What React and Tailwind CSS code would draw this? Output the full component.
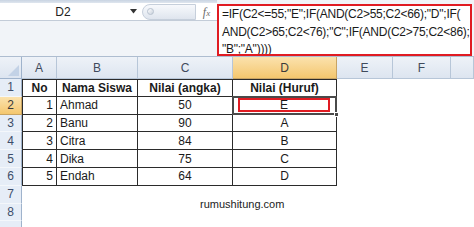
import React from 'react';

const cols = ['A', 'B', 'C', 'D', 'E', 'F', ''];
const colWidths = '22px 35px 81px 95px 104px 56px 58px 1fr';

const rows = [
  ['No', 'Nama Siswa', 'Nilai (angka)', 'Nilai (Huruf)'],
  ['1', 'Ahmad', '50', 'E'],
  ['2', 'Banu', '90', 'A'],
  ['3', 'Citra', '84', 'B'],
  ['4', 'Dika', '75', 'C'],
  ['5', 'Endah', '64', 'D'],
];

function HeaderCell({ label, active }) {
  return (
    <div
      className={
        'h-[22px] flex items-center justify-center border-r border-b text-[12px] ' +
        (active
          ? 'bg-gradient-to-b from-[#fbe2ad] to-[#f4c76e] border-[#c8a464] text-[#3a3a3a]'
          : 'bg-gradient-to-b from-[#eef2f8] to-[#dde5f0] border-[#b7c6d8] text-[#3f4a5c]')
      }
    >
      {label}
    </div>
  );
}

function RowHead({ n, active }) {
  return (
    <div
      className={
        'h-[17.8px] flex items-center justify-center border-r border-b text-[12px] ' +
        (active
          ? 'bg-gradient-to-b from-[#fbe2ad] to-[#f4c76e] border-[#c8a464] text-[#3a3a3a]'
          : 'bg-[#e6edf7] border-r-[#9fb3cc] border-b-[#f4f7fb] text-[#3d4d6a]')
      }
    >
      {n}
    </div>
  );
}

export default function App() {
  return (
    <div
      className="w-[474px] h-[227px] overflow-hidden bg-white text-[#1a1a1a] relative"
      style={{ fontFamily: '"Liberation Sans", Arial, sans-serif' }}
    >
      {/* formula bar area */}
      <div className="h-[57px] flex items-start bg-[#f1f4f8] border-b border-[#aebdd0]">
        <div className="w-[217px] flex flex-col">
          <div className="h-[3px] bg-gradient-to-b from-[#c9d4e2] to-[#dfe6ef]" />
          <div className="h-[18px] flex items-center bg-white border-b border-[#c3ccd8]">
            <div className="w-[126px] text-center text-[12px] text-[#222]">D2</div>
            <div className="w-[14px] flex justify-center">
              <svg width="7" height="5" viewBox="0 0 7 5"><path d="M0 0h7L3.5 4.5z" fill="#333" /></svg>
            </div>
            <div className="ml-[2px] w-[54px] h-[16px] rounded-l-full bg-gradient-to-b from-[#f7f9fc] to-[#dfe5ee] border border-[#c6cfdb] flex items-center pl-[4px]">
              <div className="w-[7px] h-[7px] rounded-full bg-gradient-to-br from-white to-[#c9d1dc] border border-[#b8c2cf]" />
            </div>
            <div
              className="w-[21px] text-center text-[12px] italic text-[#6b6b6b]"
              style={{ fontFamily: '"Liberation Serif", serif' }}
            >
              f<span className="text-[9px]">x</span>
            </div>
          </div>
        </div>
        <div className="mt-[4px] w-[255px] h-[52px] bg-white border-2 border-[#e01b22] pl-[3px] text-[12px] leading-[17.5px] tracking-[-0.25px] text-[#1a1a1a] overflow-hidden whitespace-nowrap">
          <div>=IF(C2&lt;=55;"E";IF(AND(C2&gt;55;C2&lt;66);"D";IF(</div>
          <div>AND(C2&gt;65;C2&lt;76);"C";IF(AND(C2&gt;75;C2&lt;86);</div>
          <div>"B";"A"))))</div>
        </div>
      </div>

      {/* sheet grid */}
      <div className="grid" style={{ gridTemplateColumns: colWidths }}>
        <div className="h-[22px] bg-gradient-to-b from-[#eef2f8] to-[#dde5f0] border-r border-b border-[#9fb3cc] flex items-end justify-end p-[2px]">
          <svg width="11" height="11" viewBox="0 0 11 11"><path d="M11 0V11H0z" fill="#c3d2e6" /></svg>
        </div>
        {cols.map((c, i) => (
          <HeaderCell key={i} label={c} active={c === 'D'} />
        ))}

        {rows.map((r, ri) => (
          <React.Fragment key={ri}>
            <RowHead n={ri + 1} active={ri === 1} />
            {r.map((v, ci) => {
              const base =
                'h-[17.8px] flex items-center text-[12px] border-r border-b border-[#2b2b2b] ' +
                (ci === 0 ? 'border-l ' : '') +
                (ri === 0 ? 'border-t font-bold ' : '');
              const align =
                ri === 0
                  ? 'justify-center'
                  : ci === 0
                  ? 'justify-end pr-[3px]'
                  : ci === 1
                  ? 'justify-start pl-[3px]'
                  : 'justify-center';
              if (ri === 1 && ci === 3) {
                return (
                  <div key={ci} className={base + 'relative pl-[5px] pr-[6px] py-[1.5px] items-stretch'}>
                    <div className="absolute -inset-[1px] border-2 border-[#4a4a4a]" />
                    <div className="absolute -right-[3px] -bottom-[3px] w-[5px] h-[5px] bg-[#4a4a4a] border border-white" />
                    <div className="relative flex-1 border-2 border-[#e01b22] flex items-center justify-center leading-none">
                      {v}
                    </div>
                  </div>
                );
              }
              return (
                <div key={ci} className={base + align}>
                  {v}
                </div>
              );
            })}
            <div className="h-[17.8px]" />
            <div className="h-[17.8px]" />
            <div className="h-[17.8px]" />
          </React.Fragment>
        ))}

        {[7, 8, ''].map((n, i) => (
          <React.Fragment key={i}>
            <RowHead n={n} />
            <div className="col-span-7 h-[17.8px]" />
          </React.Fragment>
        ))}
      </div>

      <div className="absolute left-[200px] top-[196px] text-[11px] text-[#222]">rumushitung.com</div>
    </div>
  );
}
